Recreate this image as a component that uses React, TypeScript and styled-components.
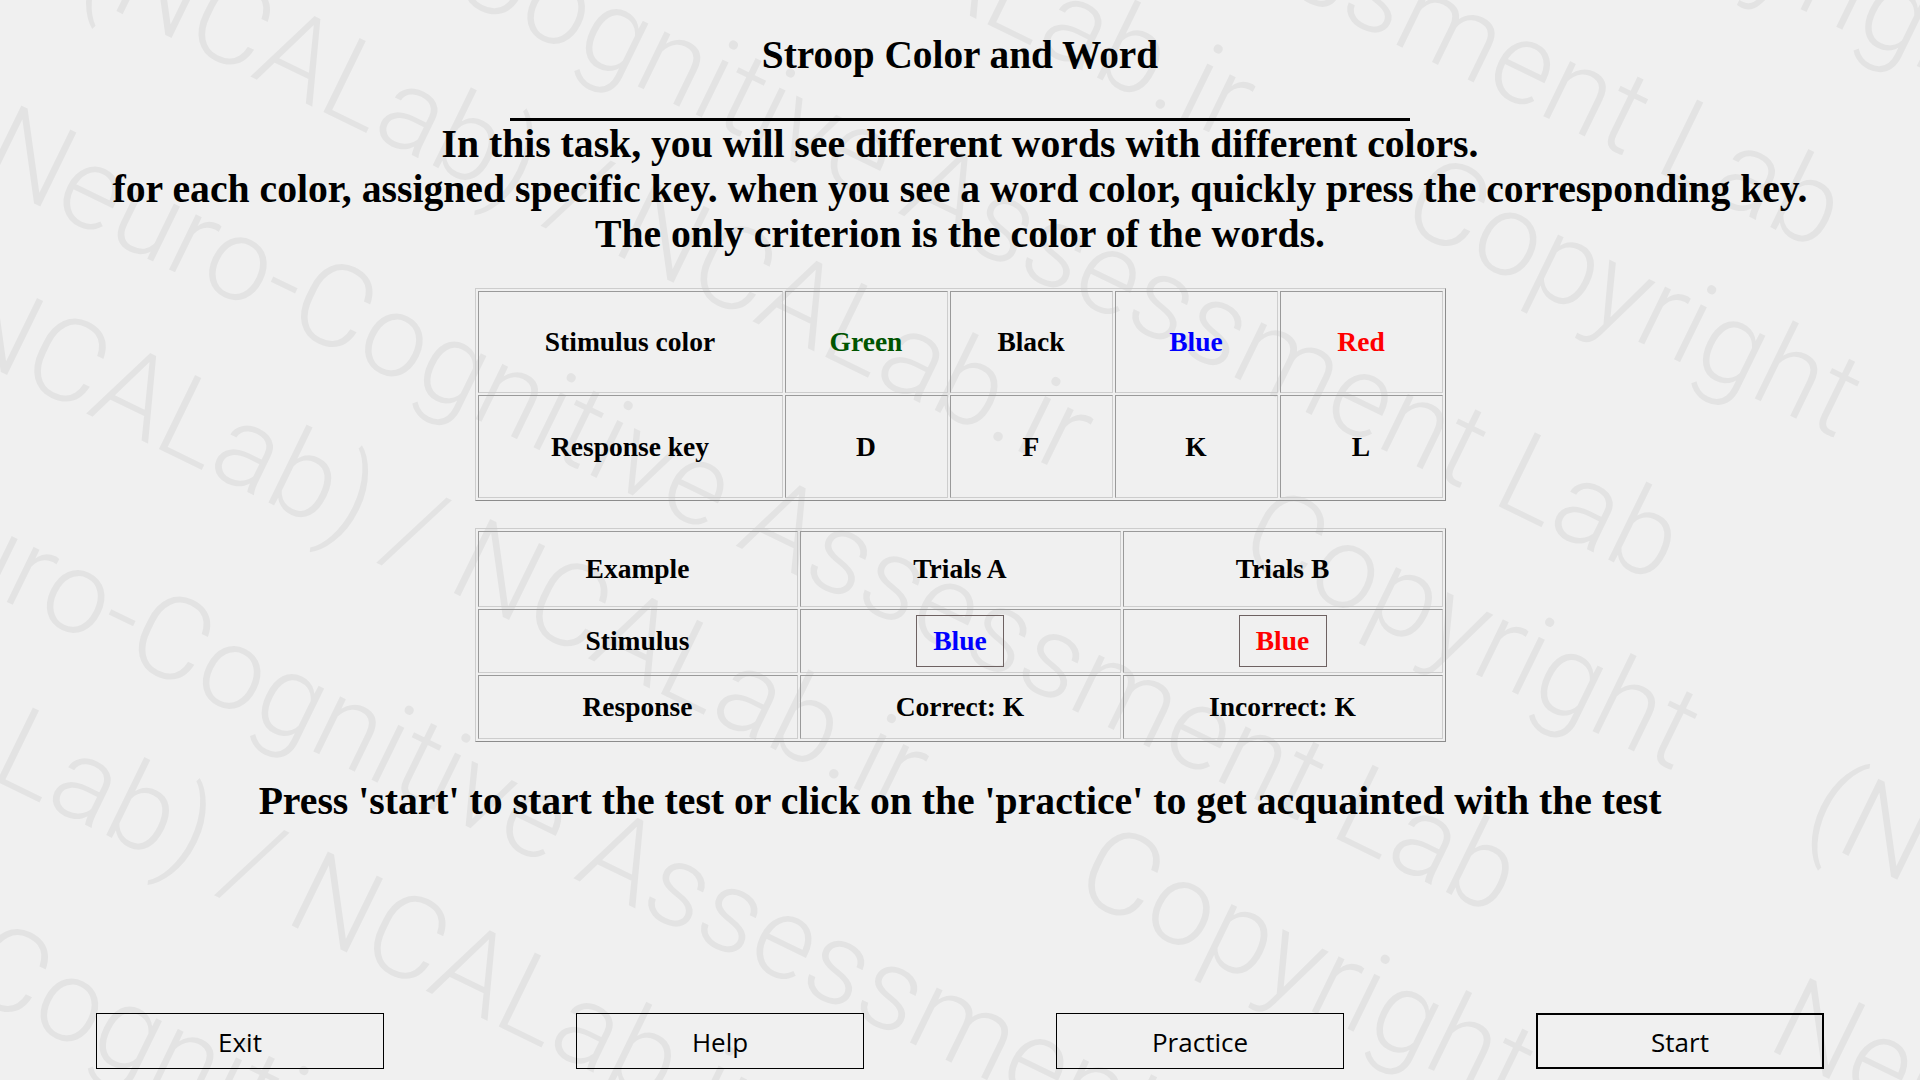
import React from "react";
import styled, { createGlobalStyle } from "styled-components";

const GlobalStyle = createGlobalStyle`
  html, body {
    margin: 0;
    padding: 0;
    background: #f0f0f0;
  }
  body {
    overflow: hidden;
  }
`;

const Page = styled.div`
  position: relative;
  width: 1920px;
  height: 1080px;
  overflow: hidden;
  background: #f0f0f0;
  font-family: "Liberation Serif", "Times New Roman", serif;
  color: #000;
`;

/* ---------- watermark ---------- */

const WatermarkLayer = styled.div`
  position: absolute;
  inset: 0;
  z-index: 0;
  pointer-events: none;
  overflow: hidden;
`;

const WatermarkCanvas = styled.div`
  position: absolute;
  left: 0;
  top: 0;
  width: 0;
  height: 0;
  transform-origin: 0 0;
  transform: rotate(26deg);
`;

const WM_SIZE = 116;

const WatermarkText = styled.span<{ $u: number; $v: number; $center?: boolean }>`
  position: absolute;
  left: ${(p) => p.$u}px;
  top: ${(p) => p.$v - WM_SIZE * 0.55}px;
  transform: ${(p) => (p.$center ? "translateX(-50%)" : "none")};
  white-space: nowrap;
  font-family: Roboto, "Noto Sans", sans-serif;
  font-weight: 300;
  font-size: ${WM_SIZE}px;
  line-height: ${WM_SIZE}px;
  color: rgba(0, 0, 0, 0.05);
`;

/* ---------- content ---------- */

const Content = styled.main`
  position: relative;
  z-index: 1;
  height: 100%;
  display: flex;
  flex-direction: column;
  align-items: center;
`;

const Title = styled.h1`
  margin: 33px 0 0;
  font-size: 39.3px;
  line-height: 45px;
  font-weight: bold;
  text-align: center;
`;

const Rule = styled.div`
  margin-top: 40px;
  width: 900px;
  height: 3px;
  background: #000;
`;

const Instructions = styled.p`
  margin: 1px 0 0;
  font-size: 39.7px;
  line-height: 45px;
  font-weight: bold;
  text-align: center;
`;

const Grid = styled.table<{ $mt: number }>`
  margin-top: ${(p) => p.$mt}px;
  border-collapse: separate;
  border-spacing: 2px;
  border: 1px solid;
  border-color: #cdcdcd #8c8c8c #8c8c8c #cdcdcd;
`;

const Cell = styled.td<{ $w: number; $h: number; $color?: string }>`
  box-sizing: border-box;
  width: ${(p) => p.$w}px;
  min-width: ${(p) => p.$w}px;
  height: ${(p) => p.$h}px;
  padding: 0;
  border: 1px solid;
  border-color: #9a9a9a #cdcdcd #cdcdcd #9a9a9a;
  text-align: center;
  vertical-align: middle;
  font-size: 27.5px;
  font-weight: bold;
  color: ${(p) => p.$color ?? "#000"};
`;

const StimulusBox = styled.span<{ $color: string }>`
  display: inline-block;
  box-sizing: border-box;
  width: 88px;
  height: 52px;
  line-height: 50px;
  border: 1px solid #6e6262;
  color: ${(p) => p.$color};
  vertical-align: middle;
`;

const Prompt = styled.p`
  margin: 37px 0 0;
  font-size: 39.7px;
  line-height: 45px;
  font-weight: bold;
  text-align: center;
`;

const ButtonBar = styled.div`
  margin-top: auto;
  margin-bottom: 11px;
  width: 1920px;
  display: grid;
  grid-template-columns: repeat(4, 480px);
  justify-items: center;
`;

const ActionButton = styled.button<{ $primary?: boolean }>`
  box-sizing: border-box;
  width: 288px;
  height: 56px;
  padding: 2px 0 0;
  background: transparent;
  border: ${(p) => (p.$primary ? 2 : 1)}px solid #000;
  border-radius: 0;
  font-family: "Open Sans", "Noto Sans", sans-serif;
  font-size: 26px;
  color: #000;
  cursor: pointer;
`;

const colorRow = [
  { label: "Green", color: "#005400", key: "D" },
  { label: "Black", color: "#000000", key: "F" },
  { label: "Blue", color: "#0000ff", key: "K" },
  { label: "Red", color: "#ff0000", key: "L" },
];

const linesA = [-606, -236, 134, 504, 874];
const linesB = [-815, -445, -75, 300, 670];

export default function App() {
  return (
    <Page>
      <GlobalStyle />
      <WatermarkLayer aria-hidden="true">
        <WatermarkCanvas>
          {linesA.map((v) => (
            <React.Fragment key={`a${v}`}>
              <WatermarkText $u={55} $v={v}>
                Neuro-Cognitive Assessment Lab
              </WatermarkText>
              <WatermarkText $u={2045} $v={v}>
                Neuro-Cognitive Assessment Lab
              </WatermarkText>
            </React.Fragment>
          ))}
          {linesB.map((v) => (
            <React.Fragment key={`b${v}`}>
              <WatermarkText $u={62} $v={v}>
                (NCALab) / NCALab.ir
              </WatermarkText>
              <WatermarkText $u={1599} $v={v} $center>
                Copyright
              </WatermarkText>
              <WatermarkText $u={1982} $v={v}>
                (NCALab) / NCALab.ir
              </WatermarkText>
            </React.Fragment>
          ))}
        </WatermarkCanvas>
      </WatermarkLayer>

      <Content>
        <Title>Stroop Color and Word</Title>
        <Rule />
        <Instructions>
          In this task, you will see different words with different colors.
          <br />
          for each color, assigned specific key. when you see a word color, quickly press the
          corresponding key.
          <br />
          The only criterion is the color of the words.
        </Instructions>

        <Grid $mt={31}>
          <tbody>
            <tr>
              <Cell $w={305} $h={102}>
                Stimulus color
              </Cell>
              {colorRow.map((c) => (
                <Cell key={c.label} $w={163} $h={102} $color={c.color}>
                  {c.label}
                </Cell>
              ))}
            </tr>
            <tr>
              <Cell $w={305} $h={103}>
                Response key
              </Cell>
              {colorRow.map((c) => (
                <Cell key={c.key} $w={163} $h={103}>
                  {c.key}
                </Cell>
              ))}
            </tr>
          </tbody>
        </Grid>

        <Grid $mt={27}>
          <tbody>
            <tr>
              <Cell $w={320} $h={76}>
                Example
              </Cell>
              <Cell $w={321} $h={76}>
                Trials A
              </Cell>
              <Cell $w={320} $h={76}>
                Trials B
              </Cell>
            </tr>
            <tr>
              <Cell $w={320} $h={64}>
                Stimulus
              </Cell>
              <Cell $w={321} $h={64}>
                <StimulusBox $color="#0000ff">Blue</StimulusBox>
              </Cell>
              <Cell $w={320} $h={64}>
                <StimulusBox $color="#ff0000">Blue</StimulusBox>
              </Cell>
            </tr>
            <tr>
              <Cell $w={320} $h={64}>
                Response
              </Cell>
              <Cell $w={321} $h={64}>
                Correct: K
              </Cell>
              <Cell $w={320} $h={64}>
                Incorrect: K
              </Cell>
            </tr>
          </tbody>
        </Grid>

        <Prompt>
          Press 'start' to start the test or click on the 'practice' to get acquainted with the test
        </Prompt>

        <ButtonBar>
          <ActionButton>Exit</ActionButton>
          <ActionButton>Help</ActionButton>
          <ActionButton>Practice</ActionButton>
          <ActionButton $primary>Start</ActionButton>
        </ButtonBar>
      </Content>
    </Page>
  );
}
